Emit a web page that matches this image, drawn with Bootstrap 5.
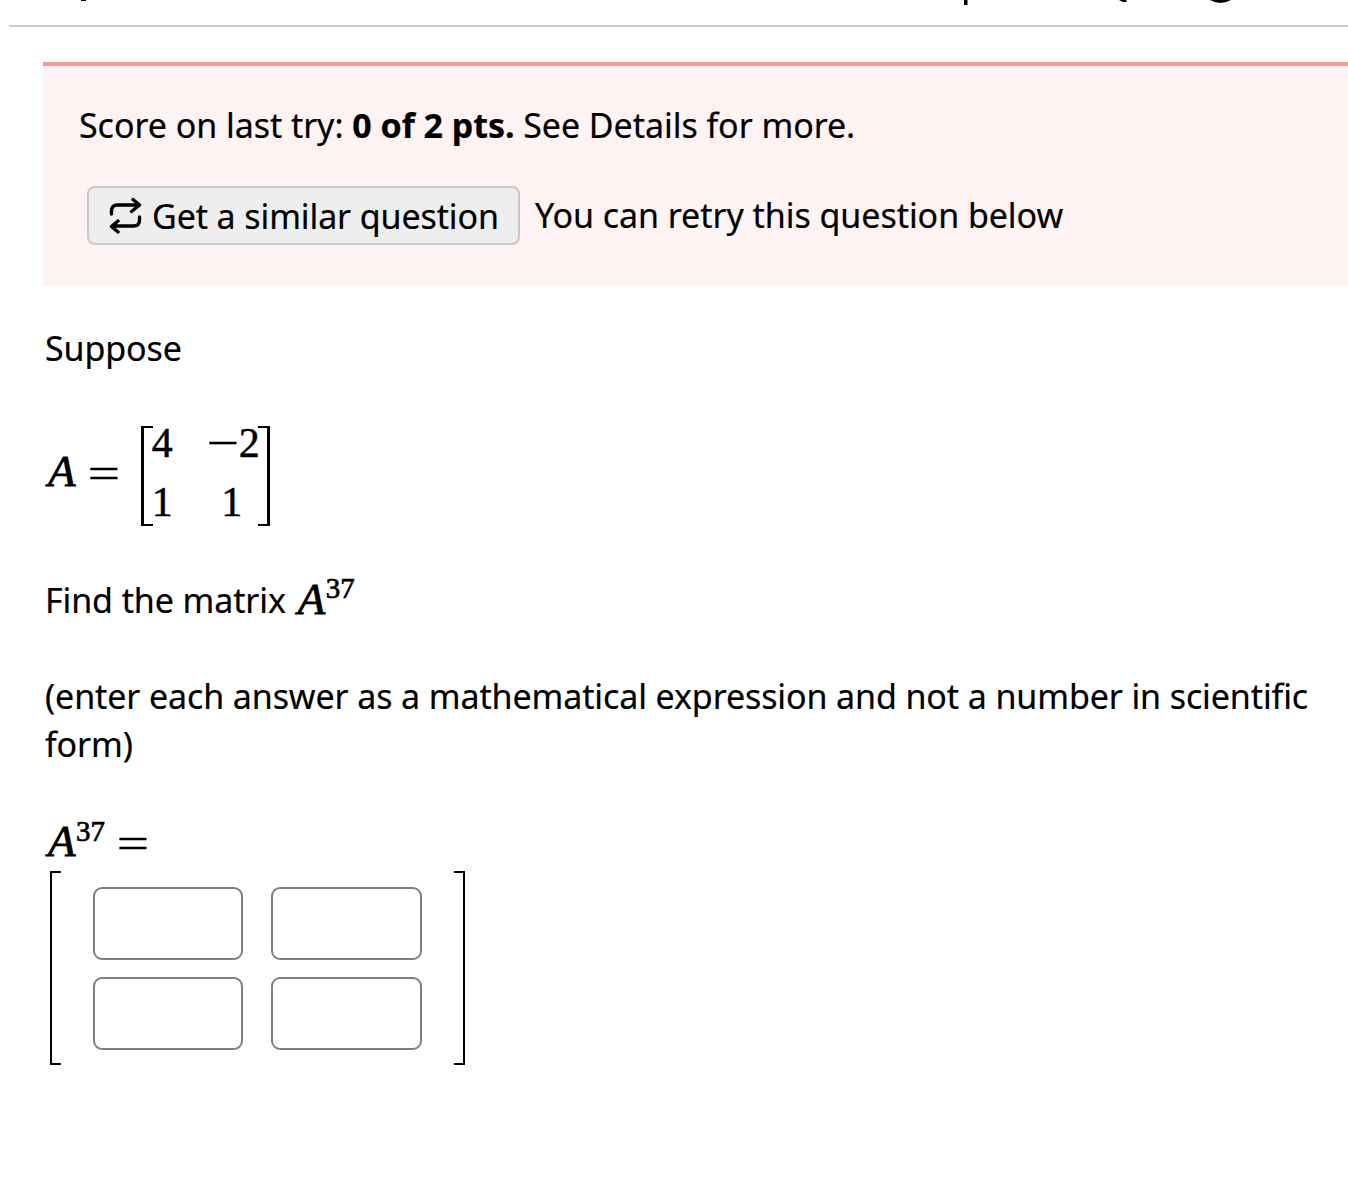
<!DOCTYPE html>
<html lang="en">
<head>
<meta charset="utf-8">
<title>Matrix power question</title>
<link rel="stylesheet" href="https://cdn.jsdelivr.net/npm/bootstrap@5.3.0/dist/css/bootstrap.min.css">
<style>
body{font-family:"Noto Sans","Open Sans",sans-serif;font-size:34px;letter-spacing:-.11px;line-height:48px;color:#000;background:#fff;width:1348px;height:1184px;overflow:hidden;-webkit-text-stroke:.2px #000}
.topstrip{height:27px;margin-left:9px;border-bottom:2px solid #ccc}
.scorebox{margin:35px 0 0 43px;height:224px;border-top:4px solid #f19c9a;background:#fdf3f2;padding:35px 36px 0;letter-spacing:-.05px}
.retryrow{margin:37px 0 0 8px}
.btn.simbtn{width:433px;height:59px;padding:1px 0 0 20px;border:2px solid #c8c8c8;border-radius:8px;background:#eee;color:#000;font-size:34px;letter-spacing:-.11px;line-height:53px;gap:10px}
.simbtn svg{margin-top:-2px}
.retrynote{padding-left:15px;margin-top:-1px}
.question{margin-left:45px}
.mth{font-family:"Liberation Serif",serif;font-size:42px;line-height:48px;letter-spacing:0;-webkit-text-stroke:.5px #000}
.avar{font-style:italic;font-size:45px;display:inline-block;width:31px;padding-left:3px;margin-top:-1px;-webkit-text-stroke:.8px #000}
.expo{font-size:29px;line-height:30px;margin-top:-3px;-webkit-text-stroke:.7px #000}
.rel{display:inline-block;transform:scaleX(1.36);-webkit-text-stroke:.3px #000}
.brk{width:12px;border:solid #000;border-width:2px 0 2px 3px}
.brk-r{border-width:2px 3px 2px 0}
.mat{height:100px;margin-top:54px}
.mat .avar{margin-top:21px}
.mat>.rel{margin:23px 0 0 16px}
.mat>.brk:not(.brk-r){margin-left:25px}
.cells{display:grid;grid-template-columns:20px 56px;column-gap:32px;grid-template-rows:59px 40px;margin:-7px -2px 0 -1px;width:108px}
.answer{width:415px;height:194px;margin:4px 0 0 5px}
.brk2{width:11px;border-width:2px 0 2px 2px}
.brk2.brk-r{border-width:2px 2px 2px 0}
.inputs{display:grid;grid-template-columns:150px 151px;gap:17px 28px;padding:16px 0 0 32px;width:393px;align-content:start}
.inputs .form-control{height:73px;border:2px solid #808080;border-radius:9px;padding:0 8px;font-size:34px}
.suppose{margin-top:38px}
.findrow{margin-top:50px}
.findrow .mth{margin-left:9px}
.hint{margin-top:48px}
.resultrow{margin-top:51px;height:48px}
.resultrow .avar{margin-top:-2px}
.resultrow .rel{margin:0 0 0 16px}
</style>
<script src="https://cdn.jsdelivr.net/npm/bootstrap@5.3.0/dist/js/bootstrap.bundle.min.js"></script>
</head>
<body>
<header class="topstrip">
<svg class="d-block" width="1339" height="8" aria-hidden="true"><path d="M72 0h5v1h-5zM955 0h3.500v5H955zM1110 0h7l1 2h-4zM1201 0h21q-10.500 6-21 0z"/></svg>
</header>
<section class="scorebox">
<div class="text-nowrap">Score on last try: <b>0 of 2 pts.</b> See Details for more.</div>
<div class="retryrow d-flex align-items-center text-nowrap">
<button type="button" class="btn simbtn d-flex align-items-center">
<svg width="33" height="37" viewBox="0 0 33 37" fill="none" stroke="#000" stroke-width="3.4" stroke-linecap="round" stroke-linejoin="round"><path d="M2.500 17v-3q0-6 6-6H30M24 2.500l6.500 5.500-8 6.500M30.500 20v3q0 6-6 6H3M9 24l-6.500 5.500L9 35"/></svg>
<span>Get a similar question</span></button>
<span class="retrynote">You can retry this question below</span>
</div>
</section>
<main class="question">
<div class="suppose">Suppose</div>
<div class="mth d-flex mat">
<span class="avar">A</span><span class="rel">=</span>
<span class="brk"></span>
<div class="cells"><span>4</span><span class="text-end text-nowrap"><span class="rel me-1">−</span>2</span><span>1</span><span class="text-center">1</span></div>
<span class="brk brk-r"></span>
</div>
<div class="findrow d-flex"><span>Find the matrix</span><span class="mth d-flex"><span class="avar">A</span><span class="expo">37</span></span></div>
<div class="hint">(enter each answer as a mathematical expression and not a number in scientific<br>form)</div>
<div class="resultrow mth d-flex"><span class="avar">A</span><span class="expo">37</span><span class="rel">=</span></div>
<div class="answer d-flex">
<span class="brk brk2"></span>
<div class="inputs"><input class="form-control" aria-label="Row 1 column 1"><input class="form-control" aria-label="Row 1 column 2"><input class="form-control" aria-label="Row 2 column 1"><input class="form-control" aria-label="Row 2 column 2"></div>
<span class="brk brk2 brk-r"></span>
</div>
</main>
</body>
</html>
